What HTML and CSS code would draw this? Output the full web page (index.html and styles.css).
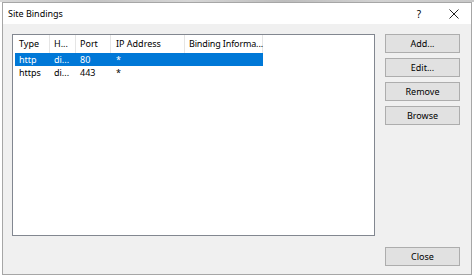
FILE: index.html
```html
<!DOCTYPE html>
<html>
<head>
<meta charset="utf-8">
<title>Site Bindings</title>
<link rel="stylesheet" href="styles.css">
</head>
<body>
<div class="backdrop"></div>
<div class="window">
  <div class="titlebar">
    <span class="title">Site Bindings</span>
    <span class="help">?</span>
    <svg class="close-x" width="10" height="10" viewBox="0 0 10 10"><path d="M0.5 0.5 L9.5 9.5 M9.5 0.5 L0.5 9.5" stroke="#222" stroke-width="1" fill="none"/></svg>
  </div>
  <div class="content">
    <div class="main">
      <div class="listbox">
        <div class="row header">
          <div class="c c1">Type</div>
          <div class="c c2">H...</div>
          <div class="c c3">Port</div>
          <div class="c c4">IP Address</div>
          <div class="c c5">Binding Informa...</div>
        </div>
        <div class="row item selected">
          <div class="c c1">http</div>
          <div class="c c2">di...</div>
          <div class="c c3">80</div>
          <div class="c c4">*</div>
          <div class="c c5"></div>
        </div>
        <div class="row item">
          <div class="c c1">https</div>
          <div class="c c2">di...</div>
          <div class="c c3">443</div>
          <div class="c c4">*</div>
          <div class="c c5"></div>
        </div>
      </div>
      <div class="buttons">
        <div class="btn">Add...</div>
        <div class="btn">Edit...</div>
        <div class="btn">Remove</div>
        <div class="btn">Browse</div>
      </div>
    </div>
    <div class="footer">
      <div class="btn">Close</div>
    </div>
  </div>
</div>
</body>
</html>
```
FILE: styles.css
```css
html, body {
  margin: 0;
  padding: 0;
  background: #ffffff;
  font-family: "Noto Sans", "Liberation Sans", sans-serif;
  font-size: 9px;
  color: #000;
}
.backdrop {
  height: 2px;
  background: linear-gradient(90deg, #d8d8d8 0%, #c4c4c4 20%, #d6d6d6 40%, #bdbdbd 60%, #d2d2d2 80%, #c8c8c8 100%);
}
.window {
  margin-left: 2px;
  width: 470px;
  box-sizing: border-box;
  border: 1px solid #a6a6a6;
  background: #f0f0f0;
}
.titlebar {
  height: 21px;
  background: #ffffff;
  display: flex;
  align-items: center;
  padding-left: 5px;
  padding-right: 12px;
}
.title {
  flex: 1;
  font-size: 9px;
}
.help {
  font-size: 10px;
  margin-right: 28px;
}
.close-x {
  display: block;
}
.content {
  height: 250px;
  box-sizing: border-box;
  padding: 10px 11px 8px 9px;
  display: flex;
  flex-direction: column;
}
.main {
  display: flex;
  gap: 10px;
}
.listbox {
  width: 363px;
  height: 202px;
  box-sizing: border-box;
  border: 1px solid #828790;
  background: #fff;
  padding: 0 2px;
}
.row {
  display: flex;
  width: 248px;
}
.header {
  height: 18px;
  align-items: center;
}
.header .c {
  border-right: 1px solid #e5e5e5;
  height: 18px;
  line-height: 18px;
}
.item {
  height: 13px;
  line-height: 13px;
}
.selected {
  background: #0078d7;
  color: #fff;
}
.c {
  box-sizing: border-box;
  padding-left: 4px;
  white-space: nowrap;
}
.c1 { width: 35px; }
.c2 { width: 26px; }
.c3 { width: 35px; }
.c4 { width: 74px; padding-left: 5px; }
.c5 { width: 78px; letter-spacing: -0.15px; }
.buttons {
  display: flex;
  flex-direction: column;
  gap: 5px;
}
.btn {
  width: 75px;
  height: 19px;
  box-sizing: border-box;
  border: 1px solid #adadad;
  background: #e1e1e1;
  text-align: center;
  line-height: 17px;
}
.footer {
  margin-top: 11px;
  display: flex;
  justify-content: flex-end;
}
```
